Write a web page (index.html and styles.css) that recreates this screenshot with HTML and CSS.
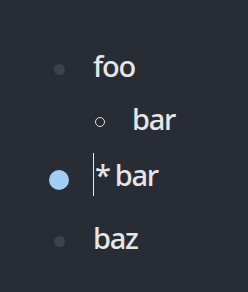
FILE: index.html
```html
<!DOCTYPE html>
<html>
<head>
<meta charset="utf-8">
<title>outline</title>
<link rel="stylesheet" href="styles.css">
</head>
<body>
<div class="page">
	<div class="block">
		<div class="row">
			<span class="bullet"><span class="dot"></span></span>
			<span class="text">foo</span>
		</div>
		<div class="children">
			<div class="block">
				<div class="row">
					<span class="bullet"><span class="ring"></span></span>
					<span class="text">bar</span>
				</div>
			</div>
		</div>
	</div>
	<div class="block editing">
		<div class="row">
			<span class="bullet"><span class="dot active"></span></span>
			<span class="text"><span class="caret"></span>* bar</span>
		</div>
	</div>
	<div class="block">
		<div class="row">
			<span class="bullet"><span class="dot"></span></span>
			<span class="text">baz</span>
		</div>
	</div>
</div>
</body>
</html>
```

FILE: styles.css
```css
*{ margin:0; padding:0; box-sizing:border-box;}

html, body{ height:100%;}
body{ background:#282c34; color:#e6e6e6; font-family:"Noto Sans", "Open Sans", sans-serif; font-size:29px; font-weight:500; letter-spacing:-1.3px;}

.page{ padding:46px 0 0 40px;}

.row{ display:flex; align-items:center; height:40px; line-height:40px;}
.bullet{ width:38px; height:40px; margin-right:15px; display:flex; align-items:center; justify-content:center; flex:none; padding-top:6px;}
.text{ white-space:nowrap; position:relative;}

.dot{ width:11px; height:11px; border-radius:50%; background:#3a424d;}
.dot.active{ width:20px; height:20px; background:#a2cdf4;}
.ring{ width:10px; height:10px; border-radius:50%; border:1.5px solid #e0e0e0;}

.children{ padding-left:41px; margin-top:13px;}
.children .bullet{ width:38px; margin-right:13px;}

.editing{ margin-top:16px;}
.editing .row{ height:44px;}
.editing .bullet{ height:44px;}
.editing .text{ word-spacing:-1px;}
.caret{ display:inline-block; width:1px; height:43px; background:#e8e8e8; vertical-align:middle; margin-right:1px; position:relative; top:-3px;}

.editing + .block{ margin-top:19px;}
```
